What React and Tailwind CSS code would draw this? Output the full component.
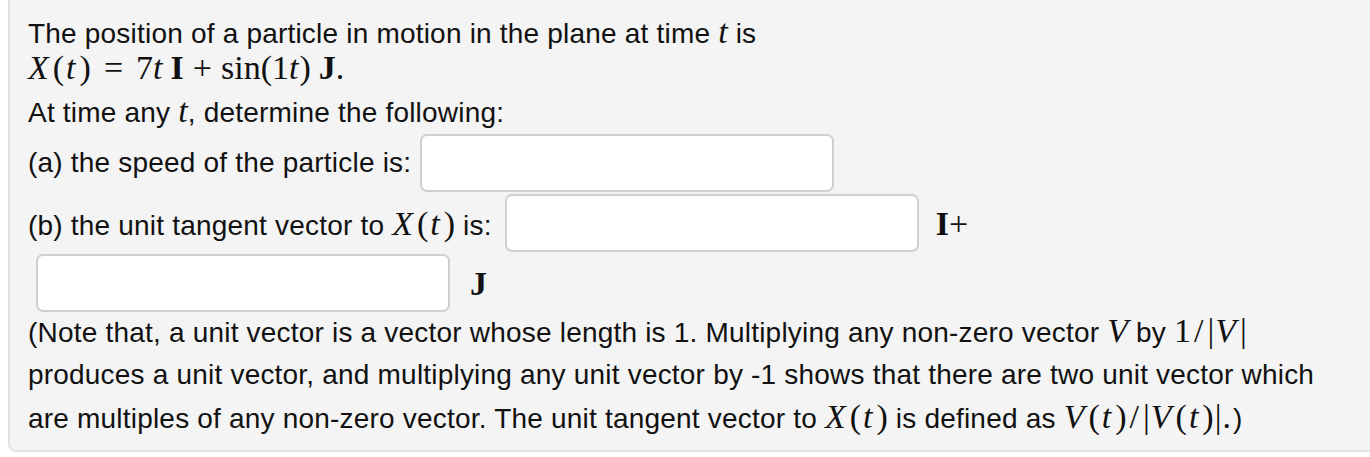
import React from "react";

const serif = { fontFamily: '"Liberation Serif", "DejaVu Serif", serif' };

function M({ children, className = "" }) {
  return (
    <span className={"text-[34px] tracking-normal " + className} style={serif}>
      {children}
    </span>
  );
}
function I({ children, className = "" }) {
  return <span className={"italic " + className}>{children}</span>;
}
function B({ children }) {
  return <span className="font-bold">{children}</span>;
}
function Ft({ v }) {
  return (
    <>
      <I className="mr-[4px]">{v}</I>(<I className="ml-[2px] mr-[4px]">t</I>)
    </>
  );
}
function Slash() {
  return <span className="mx-[3px]">/</span>;
}
function Bar() {
  return <span className="mx-[1px]">|</span>;
}

function Input({ className = "" }) {
  return (
    <div
      className={
        "h-[58px] w-[414px] shrink-0 rounded-[7px] border-2 border-[#d0d0d0] bg-white " +
        className
      }
    />
  );
}

export default function App() {
  return (
    <div
      className="h-[457px] w-[1370px] overflow-hidden bg-white text-[28px] tracking-[0.2px] text-[#111]"
      style={{ fontFamily: '"Liberation Sans", Arial, sans-serif' }}
    >
      <div className="ml-[8px] mt-[-10px] h-[462px] w-[1400px] rounded-[8px] border-2 border-[#e2e2e2] bg-[#f4f4f4] pl-[18px] pt-[19px]">
        <div className="h-[42px] leading-[42px] whitespace-nowrap">
          The position of a particle in motion in the plane at time{" "}
          <M><I>t</I></M> is
        </div>
        <div className="h-[38px] leading-[30px] whitespace-nowrap">
          <M>
            <Ft v="X" />
            <span className="mx-[13px]">=</span>7<I>t</I>
            <span className="ml-[8px]"><B>I</B></span>
            <span className="mx-[9px]">+</span>sin(1<I className="mr-[1px]">t</I>)
            <span className="ml-[8px]"><B>J</B></span>.
          </M>
        </div>
        <div className="h-[42px] leading-[40px] whitespace-nowrap">
          At time any <M><I>t</I></M>, determine the following:
        </div>
        <div className="flex h-[60px] items-center whitespace-nowrap">
          <span>(a) the speed of the particle is:</span>
          <Input className="ml-[9px]" />
        </div>
        <div className="flex h-[60px] items-center whitespace-nowrap">
          <span>
            (b) the unit tangent vector to{" "}
            <M>
              <Ft v="X" />
            </M>{" "}
            is:
          </span>
          <Input className="ml-[13px]" />
          <M className="ml-[17px]">
            <B>I</B>+
          </M>
        </div>
        <div className="flex h-[60px] items-center whitespace-nowrap">
          <Input className="ml-[8px]" />
          <M className="ml-[20px]">
            <B>J</B>
          </M>
        </div>
        <div className="mt-[-3px] leading-[42px] whitespace-nowrap">
          (Note that, a unit vector is a vector whose length is 1. Multiplying any non-zero vector{" "}
          <M><I>V</I></M> by{" "}
          <M>
            1<Slash />
            <Bar />
            <I className="mr-[3px]">V</I>
            <Bar />
          </M>
          <br />
          produces a unit vector, and multiplying any unit vector by -1 shows that there are two unit vector which
          <br />
          are multiples of any non-zero vector. The unit tangent vector to{" "}
          <M>
            <Ft v="X" />
          </M>{" "}
          is defined as{" "}
          <M>
            <Ft v="V" />
            <Slash />
            <Bar />
            <Ft v="V" />
            <Bar />
            <span className="mr-[2px]">.</span>
          </M>
          )
        </div>
      </div>
    </div>
  );
}
